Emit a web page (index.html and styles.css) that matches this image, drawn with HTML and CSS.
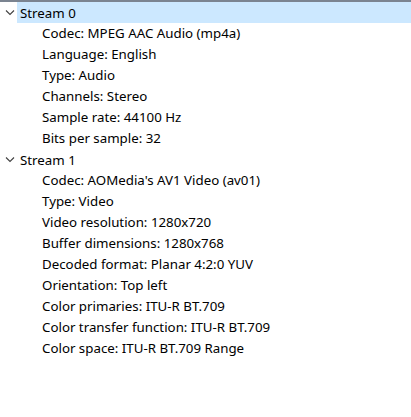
FILE: index.html
```html
<!DOCTYPE html>
<html lang="en">
<head>
    <meta charset="UTF-8">
    <title>Stream info</title>
    <link rel="stylesheet" href="styles.css">
</head>
<body>
    <div class="tree">
        <div class="node selected">
            <svg class="chevron" width="9" height="6" viewBox="0 0 9 6"><path d="M0.5 0.5 L4.5 4.5 L8.5 0.5" fill="none" stroke="#404040" stroke-width="1.1"/></svg>
            <span class="label">Stream 0</span>
        </div>
        <div class="child">Codec: MPEG AAC Audio (mp4a)</div>
        <div class="child">Language: English</div>
        <div class="child">Type: Audio</div>
        <div class="child">Channels: Stereo</div>
        <div class="child">Sample rate: 44100 Hz</div>
        <div class="child">Bits per sample: 32</div>

        <div class="node">
            <svg class="chevron" width="9" height="6" viewBox="0 0 9 6"><path d="M0.5 0.5 L4.5 4.5 L8.5 0.5" fill="none" stroke="#404040" stroke-width="1.1"/></svg>
            <span class="label">Stream 1</span>
        </div>
        <div class="child">Codec: AOMedia's AV1 Video (av01)</div>
        <div class="child">Type: Video</div>
        <div class="child">Video resolution: 1280x720</div>
        <div class="child">Buffer dimensions: 1280x768</div>
        <div class="child">Decoded format: Planar 4:2:0 YUV</div>
        <div class="child">Orientation: Top left</div>
        <div class="child">Color primaries: ITU-R BT.709</div>
        <div class="child">Color transfer function: ITU-R BT.709</div>
        <div class="child">Color space: ITU-R BT.709 Range</div>
    </div>
</body>
</html>
```

FILE: styles.css
```css
body {
    margin: 0;
    background: #fff;
    font-family: "Noto Sans", "Open Sans", sans-serif;
    font-size: 13.3px;
    color: #000;
}
.tree {
    border-top: 2px solid #7b8491;
}
.node {
    display: flex;
    align-items: center;
    height: 21px;
}
.chevron {
    width: 17px;
    flex: none;
    padding-left: 3px;
    box-sizing: border-box;
}
.node .label {
    flex: 1;
    height: 100%;
    display: flex;
    align-items: center;
    padding-left: 3px;
}
.node.selected .label {
    background: #cce8ff;
}
.child {
    height: 21px;
    line-height: 21px;
    padding-left: 42px;
    white-space: nowrap;
}
```
